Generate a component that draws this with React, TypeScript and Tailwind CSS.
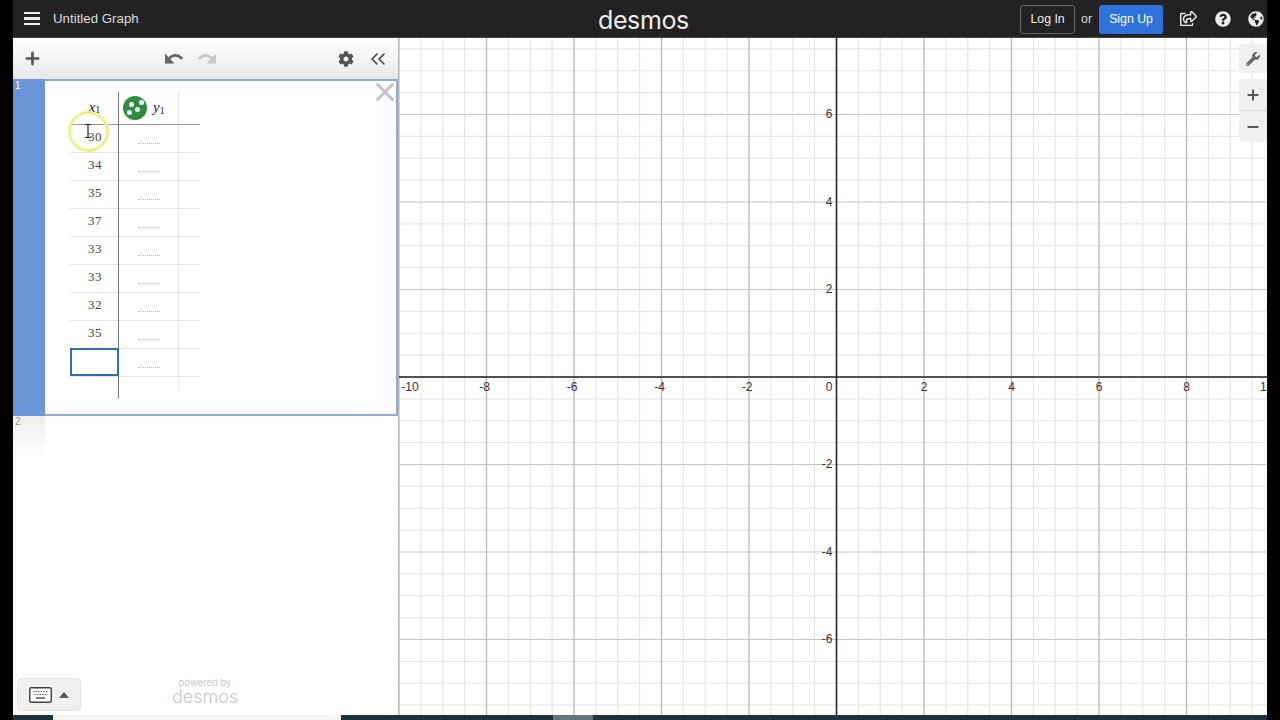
import { ChevronsLeft, Minus, Plus, X } from 'lucide-react'
import { FaCog, FaGlobeAmericas, FaQuestionCircle, FaRegShareSquare, FaWrench } from 'react-icons/fa'

const ORIGIN_X = 437.5
const ORIGIN_Y = 339
const UNIT = 43.75
const X_TICKS = [-8, -6, -4, -2, 2, 4, 6, 8]
const ROWS = ['30', '34', '35', '37', '33', '33', '32', '35', '']

function range(from: number, to: number) {
  const out: number[] = []
  for (let i = from; i <= to; i++) out.push(i)
  return out
}

// the plane is a chart, so it is drawn as one svg
function GraphPaper() {
  const xs = range(-20, 20).map((i) => ({ i, x: ORIGIN_X + (i * UNIT) / 2 }))
  const ys = range(-16, 16).map((i) => ({ i, y: ORIGIN_Y + (i * UNIT) / 2 }))
  return (
    <svg width="868" height="677" className="block">
      {xs.filter((l) => l.i % 4 !== 0).map((l) => (
        <line key={l.i} x1={l.x} x2={l.x} y1="0" y2="677" stroke="#e6e6e6" strokeWidth="1.2" />
      ))}
      {ys.filter((l) => l.i % 4 !== 0).map((l) => (
        <line key={l.i} x1="0" x2="868" y1={l.y} y2={l.y} stroke="#e6e6e6" strokeWidth="1.2" />
      ))}
      {xs.filter((l) => l.i % 4 === 0).map((l) => (
        <line key={l.i} x1={l.x} x2={l.x} y1="0" y2="677" stroke="#b8b8b8" strokeWidth="1.3" />
      ))}
      {ys.filter((l) => l.i % 4 === 0).map((l) => (
        <line key={l.i} x1="0" x2="868" y1={l.y} y2={l.y} stroke="#c4c4c4" strokeWidth="1" />
      ))}
      <line x1={ORIGIN_X} x2={ORIGIN_X} y1="0" y2="677" stroke="#222" strokeWidth="1.5" />
      <line x1="0" x2="868" y1={ORIGIN_Y} y2={ORIGIN_Y} stroke="#222" strokeWidth="1.5" />
      <g fontFamily="'Liberation Sans', sans-serif" fontSize="12" fill="#333">
        <text x="11" y={ORIGIN_Y + 14} textAnchor="middle">-10</text>
        {X_TICKS.map((t) => (
          <text key={t} x={ORIGIN_X + t * UNIT - (t < 0 ? 2 : 0)} y={ORIGIN_Y + 14} textAnchor="middle">
            {t}
          </text>
        ))}
        <text x="861" y={ORIGIN_Y + 14}>10</text>
        <text x={ORIGIN_X - 7.5} y={ORIGIN_Y + 14} textAnchor="middle">0</text>
        {[6, 4, 2, -2, -4, -6].map((t) => (
          <text key={t} x={ORIGIN_X - 4} y={ORIGIN_Y - t * UNIT + 3.5} textAnchor="end">
            {t}
          </text>
        ))}
      </g>
    </svg>
  )
}

function UndoIcon({ flip, color }: { flip?: boolean; color: string }) {
  return (
    <svg width="18" height="12" viewBox="0 0 18 12" className={flip ? '-scale-x-100' : ''}>
      <path d="M0 1.5 L0 11.5 L9.5 11.5 Z" fill={color} />
      <path d="M3.5 7 C7.5 2.4 13 1.8 17 6.8" fill="none" stroke={color} strokeWidth="2.8" />
    </svg>
  )
}

function KeyboardIcon() {
  return (
    <svg width="23" height="16" viewBox="0 0 23 16">
      <rect x="0.75" y="0.75" width="21.5" height="14.5" rx="1.5" fill="#fff" stroke="#444" strokeWidth="1.5" />
      <path d="M4 4.5h15M5.5 7.5h12" stroke="#555" strokeWidth="1.2" strokeDasharray="1.4 1.2" />
      <path d="M7 11h9" stroke="#555" strokeWidth="1.5" />
    </svg>
  )
}

function TextCursor() {
  return (
    <svg width="8" height="14" viewBox="0 0 8 14">
      <path d="M1 .5h6M4 .5v13M1 13.5h6" fill="none" stroke="#222" strokeWidth="1.2" />
    </svg>
  )
}

function Points() {
  return (
    <div className="relative h-6 w-6 shrink-0 rounded-full bg-[#2f8b3f]">
      <span className="absolute left-[4px] top-[14px] h-[5px] w-[5px] rounded-full bg-white" />
      <span className="absolute left-[6px] top-[6px] h-[5px] w-[5px] rounded-full bg-white" />
      <span className="absolute left-[16px] top-[4px] h-[5px] w-[5px] rounded-full bg-white" />
      <span className="absolute left-[12px] top-[11px] h-[5px] w-[5px] rounded-full bg-white" />
    </div>
  )
}

function DataTable() {
  return (
    <div className="relative ml-[25px] mt-[11px] h-[306px] w-[130px] font-['Liberation_Serif',serif] text-[13px] text-[#444]">
      <div className="absolute bottom-0 left-[48px] top-0 w-px bg-[#777]" />
      <div className="flex h-[33px] border-b border-[#999]">
        <div className="flex w-[49px] items-center justify-center pb-[2px] text-[15px] italic text-[#222]">
          x<sub className="text-[10px] not-italic">1</sub>
        </div>
        <div className="flex w-[60px] items-center gap-[6px] border-r border-[#e4e4e4] pl-[4px] text-[15px] italic text-[#222]">
          <Points />
          <span className="pb-[2px]">
            y<sub className="text-[10px] not-italic">1</sub>
          </span>
        </div>
      </div>
      {ROWS.map((value, index) => (
        <div key={index} className="flex h-[28px] border-b border-[#e4e4e4]">
          <div
            className={
              value
                ? 'flex w-[49px] items-center justify-center pb-[4px] pl-px tracking-[0.5px]'
                : 'relative -top-[1px] h-[28px] w-[49px] border-2 border-[#2f6fb8] bg-white'
            }
          >
            {value}
          </div>
          <div className="flex w-[60px] items-end justify-center border-r border-[#e4e4e4] pb-[8px]">
            <div className="w-[22px] border-b border-dotted border-[#bbb]" />
          </div>
        </div>
      ))}
      <div className="flex h-[15px] pl-[49px]">
        <div className="w-[60px] border-r border-[#eee]" />
      </div>
      {/* click highlight and text cursor from the screen recording */}
      <div className="absolute left-[-2px] top-[19px] h-[41px] w-[41px] rounded-full border-[3px] border-[#f0f08a]" />
      <div className="absolute left-[14px] top-[32px] flex">
        <TextCursor />
      </div>
    </div>
  )
}

function Sidebar() {
  return (
    <aside className="flex w-[386px] flex-col border-r border-[#bbb] bg-white">
      <div className="flex h-[41px] items-center bg-linear-to-b from-white to-[#e8e8e8] pl-[10px] pr-[8px]">
        <Plus size={19} strokeWidth={3.4} color="#555" />
        <div className="mb-[2px] ml-[123px] flex items-center gap-[15px]">
          <UndoIcon color="#666" />
          <UndoIcon flip color="#c8c8c8" />
        </div>
        <div className="ml-auto flex items-center gap-[12px]">
          <FaCog size={16} color="#555" />
          <ChevronsLeft size={24} strokeWidth={1.6} color="#444" />
        </div>
      </div>
      <div className="relative flex h-[337px] border-y-2 border-r-2 border-[#8eaad2]">
        <div className="-my-[2px] w-[32px] shrink-0 bg-[#6a96d8] pl-[2px] pt-px font-['Liberation_Sans',sans-serif] text-[10px] leading-[12px] text-white">1</div>
        <DataTable />
        <X size={30} strokeWidth={2.4} color="#c4c4c4" className="absolute right-[-4px] top-[-4px]" />
      </div>
      <div className="flex h-[42px]">
        <div className="w-[32px] bg-linear-to-b from-[#eeeeee] to-white pl-[2px] font-['Liberation_Sans',sans-serif] text-[10px] leading-[12px] text-[#999]">2</div>
      </div>
      <div className="flex flex-1 items-end px-[4px] pb-[4px]">
        <div className="flex h-[33px] w-[64px] items-center justify-center gap-[7px] rounded-[4px] border border-[#e4e4e4] bg-[#f0f0f0]">
          <KeyboardIcon />
          <div className="h-0 w-0 border-x-[5px] border-b-[6px] border-x-transparent border-b-[#555]" />
        </div>
        <div className="ml-[91px] flex w-[66px] flex-col items-center pb-[6px] font-['Inter',sans-serif] text-[#c8c8c8]">
          <span className="text-[9.5px] leading-[10px]">powered by</span>
          <span className="text-[18px] font-light leading-[17px]">desmos</span>
        </div>
      </div>
    </aside>
  )
}

function GraphArea() {
  return (
    <main className="relative flex-1 overflow-hidden bg-white">
      <GraphPaper />
      <div className="absolute right-0 top-[6px] flex h-[29px] w-[28px] items-center justify-center rounded-l-[4px] bg-[#f0f0f0]">
        <FaWrench size={14} color="#666" />
      </div>
      <div className="absolute right-0 top-[41px] flex h-[63px] w-[28px] flex-col rounded-l-[4px] bg-[#f0f0f0]">
        <div className="flex flex-1 items-center justify-center border-b border-[#d8d8d8]">
          <Plus size={16} strokeWidth={3} color="#555" />
        </div>
        <div className="flex flex-1 items-center justify-center">
          <Minus size={16} strokeWidth={3} color="#555" />
        </div>
      </div>
    </main>
  )
}

function Header() {
  return (
    <header className="relative flex h-[38px] items-center border-b border-[#444] bg-[#222] pl-[11px] font-['Liberation_Sans',sans-serif] text-white">
      <div className="flex w-[16px] flex-col gap-[3px]">
        <span className="h-[2.5px] bg-[#eee]" />
        <span className="h-[2.5px] bg-[#eee]" />
        <span className="h-[2.5px] bg-[#eee]" />
      </div>
      <span className="ml-[13px] mt-px text-[13.3px] text-[#ddd]">Untitled Graph</span>
      <span className="absolute left-[585px] top-[5px] font-['Inter',sans-serif] text-[25px] font-normal leading-[30px] tracking-[-0.4px] text-[#eee]">desmos</span>
      <div className="ml-auto mt-px flex items-center pr-[3px] text-[12.3px]">
        <div className="flex h-[29px] w-[55px] items-center justify-center rounded-[3px] border border-[#666] text-[#eee]">Log In</div>
        <span className="ml-[6px] mr-[7px] text-[#ddd]">or</span>
        <div className="flex h-[29px] w-[64px] items-center justify-center rounded-[3px] bg-[#2f72dc] text-white">Sign Up</div>
        <FaRegShareSquare size={17} color="#eee" className="mb-px ml-[17px]" />
        <FaQuestionCircle size={16} color="#eee" className="mb-px ml-[18px]" />
        <FaGlobeAmericas size={16} color="#eee" className="mb-px ml-[17px]" />
      </div>
    </header>
  )
}

export default function App() {
  return (
    <div className="flex h-[720px] w-[1280px] flex-col overflow-hidden bg-black">
      <div className="flex h-[715px] px-[13px]">
        <div className="flex min-w-0 flex-1 flex-col">
          <Header />
          <div className="flex min-h-0 flex-1">
            <Sidebar />
            <GraphArea />
          </div>
        </div>
      </div>
      <div className="mx-[13px] flex h-[5px] bg-[#1e3238] pl-[40px]">
        <div className="w-[288px] bg-[#f4f4f4]" />
        <div className="ml-[212px] w-[40px] bg-[#667378]" />
      </div>
    </div>
  )
}
